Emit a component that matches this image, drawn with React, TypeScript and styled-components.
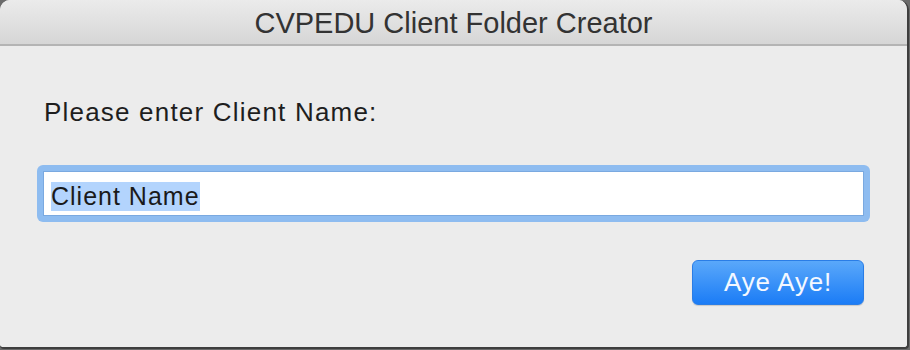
import React, { useEffect, useRef } from 'react';
import styled, { createGlobalStyle } from 'styled-components';

const GlobalStyle = createGlobalStyle`
  html, body {
    margin: 0;
    padding: 0;
    background: #6b6b6b;
  }
  body {
    font-family: 'Liberation Sans', Arial, sans-serif;
  }
  * {
    box-sizing: border-box;
  }
`;

const Window = styled.div`
  width: 909px;
  height: 349px;
  display: flex;
  flex-direction: column;
  background-color: #ececec;
  border-radius: 10px 10px 4px 4px;
  border-right: 2px solid #3e3e3e;
  border-bottom: 2px solid #3e3e3e;
  overflow: hidden;
`;

const TitleBar = styled.div`
  height: 46px;
  flex: 0 0 46px;
  display: flex;
  align-items: center;
  justify-content: center;
  background: linear-gradient(#ebebeb, #d6d6d6);
  border-bottom: 2px solid #b4b4b4;
  color: #333;
  font-size: 29px;
  padding-top: 3px;
`;

const Body = styled.div`
  flex: 1;
  display: flex;
  flex-direction: column;
  padding: 0 37px;
`;

const Label = styled.div`
  margin: 52px 0 0 7px;
  font-size: 26px;
  letter-spacing: 1.2px;
  color: #1e1e1e;
  line-height: 28px;
`;

const Field = styled.div`
  margin-top: 39px;
  height: 57px;
  padding: 6px;
  border-radius: 6px;
  background-color: #8ebcf0;
`;

const Input = styled.input`
  width: 100%;
  height: 100%;
  border: 1px solid #7aa9e0;
  outline: none;
  background: #fff;
  padding: 5px 0 0 7px;
  font-family: 'Liberation Sans', Arial, sans-serif;
  font-size: 25px;
  letter-spacing: 1px;
  color: #1a1a1a;
  &::selection {
    background-color: #b3d4fd;
    color: #1a1a1a;
  }
`;

const Actions = styled.div`
  display: flex;
  justify-content: flex-end;
  margin-top: 38px;
  padding-right: 6px;
`;

const Button = styled.button`
  width: 172px;
  height: 45px;
  border: 1px solid #2a7de6;
  border-radius: 6px;
  background: linear-gradient(#5aa8fa, #1b7cf6);
  color: #f4f8ff;
  font-family: 'Liberation Sans', Arial, sans-serif;
  font-size: 26px;
  letter-spacing: 0.8px;
  box-shadow: 0 1px 1px rgba(0, 0, 0, 0.15);
`;

const App: React.FC = () => {
  const inputRef = useRef<HTMLInputElement>(null);

  useEffect(() => {
    inputRef.current?.focus();
    inputRef.current?.select();
  }, []);

  return (
    <>
      <GlobalStyle />
      <Window>
        <TitleBar>CVPEDU Client Folder Creator</TitleBar>
        <Body>
          <Label>Please enter Client Name:</Label>
          <Field>
            <Input ref={inputRef} defaultValue='Client Name' />
          </Field>
          <Actions>
            <Button>Aye Aye!</Button>
          </Actions>
        </Body>
      </Window>
    </>
  );
};

export default App;
